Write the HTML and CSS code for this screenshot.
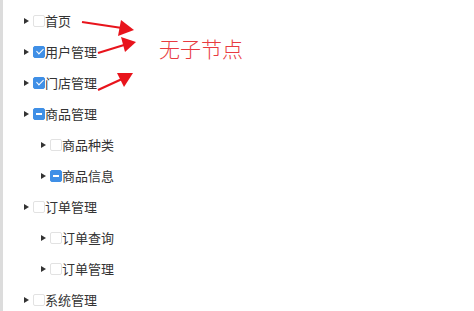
FILE: index.html
```html
<!DOCTYPE html>
<html>
<head>
<meta charset="utf-8">
<link rel="stylesheet" href="styles.css">
</head>
<body>
<div class="page">
  <ul class="tree">
    <li class="row lv1"><span class="caret"></span><span class="cb"></span><span class="label">首页</span></li>
    <li class="row lv1"><span class="caret"></span><span class="cb checked"></span><span class="label">用户管理</span></li>
    <li class="row lv1"><span class="caret"></span><span class="cb checked"></span><span class="label">门店管理</span></li>
    <li class="row lv1"><span class="caret"></span><span class="cb half"></span><span class="label">商品管理</span></li>
    <li class="row lv2"><span class="caret"></span><span class="cb"></span><span class="label">商品种类</span></li>
    <li class="row lv2"><span class="caret"></span><span class="cb half"></span><span class="label">商品信息</span></li>
    <li class="row lv1"><span class="caret"></span><span class="cb"></span><span class="label">订单管理</span></li>
    <li class="row lv2"><span class="caret"></span><span class="cb"></span><span class="label">订单查询</span></li>
    <li class="row lv2"><span class="caret"></span><span class="cb"></span><span class="label">订单管理</span></li>
    <li class="row lv1"><span class="caret"></span><span class="cb"></span><span class="label">系统管理</span></li>
  </ul>
  <svg class="arrows" width="474" height="311" viewBox="0 0 474 311">
    <g stroke="#e8141c" stroke-width="2.2" fill="#e8141c">
      <line x1="82" y1="22" x2="122" y2="28"/>
      <polygon points="134,30 121,20 118,36" stroke="none"/>
      <line x1="98" y1="53" x2="124" y2="45"/>
      <polygon points="136,42 121,37 125,52" stroke="none"/>
      <line x1="98" y1="90" x2="122" y2="79"/>
      <polygon points="133,73 117,73 124,87" stroke="none"/>
    </g>
  </svg>
  <div class="note">无子节点</div>
</div>
</body>
</html>
```
FILE: styles.css
```css
html, body {
  margin: 0;
  padding: 0;
  background: #fff;
}
.page {
  position: relative;
  width: 474px;
  height: 311px;
  overflow: hidden;
  border-left: 3px solid #dcdcdc;
  box-sizing: border-box;
  font-family: "Noto Sans CJK SC", "Liberation Sans", sans-serif;
}
.tree {
  list-style: none;
  margin: 0;
  padding: 5px 0 0 0;
}
.row {
  height: 31px;
  display: flex;
  align-items: center;
  font-size: 13px;
  color: #333;
}
.lv1 { padding-left: 21px; }
.lv2 { padding-left: 38px; }
.caret {
  width: 0;
  height: 0;
  border-top: 3.5px solid transparent;
  border-bottom: 3.5px solid transparent;
  border-left: 5px solid #333;
  margin-right: 4px;
}
.cb {
  width: 12px;
  height: 12px;
  box-sizing: border-box;
  border: 1px solid #e2e2e2;
  border-radius: 2px;
  background: #fff;
  position: relative;
}
.cb.checked, .cb.half {
  background: #3f8fe6;
  border-color: #3f8fe6;
}
.cb.checked::after {
  content: "";
  position: absolute;
  left: 3.5px;
  top: 0.5px;
  width: 3px;
  height: 6px;
  border-right: 1.5px solid #fff;
  border-bottom: 1.5px solid #fff;
  transform: rotate(45deg);
}
.cb.half::after {
  content: "";
  position: absolute;
  left: 2px;
  top: 4.5px;
  width: 6px;
  height: 1.5px;
  background: #fff;
}
.label {
  line-height: 1;
}
.arrows {
  position: absolute;
  left: -3px;
  top: 0;
}
.note {
  position: absolute;
  left: 156px;
  top: 33px;
  font-size: 21px;
  color: #e83a40;
  font-family: "Noto Sans CJK SC", sans-serif;
  font-weight: 300;
}
```
